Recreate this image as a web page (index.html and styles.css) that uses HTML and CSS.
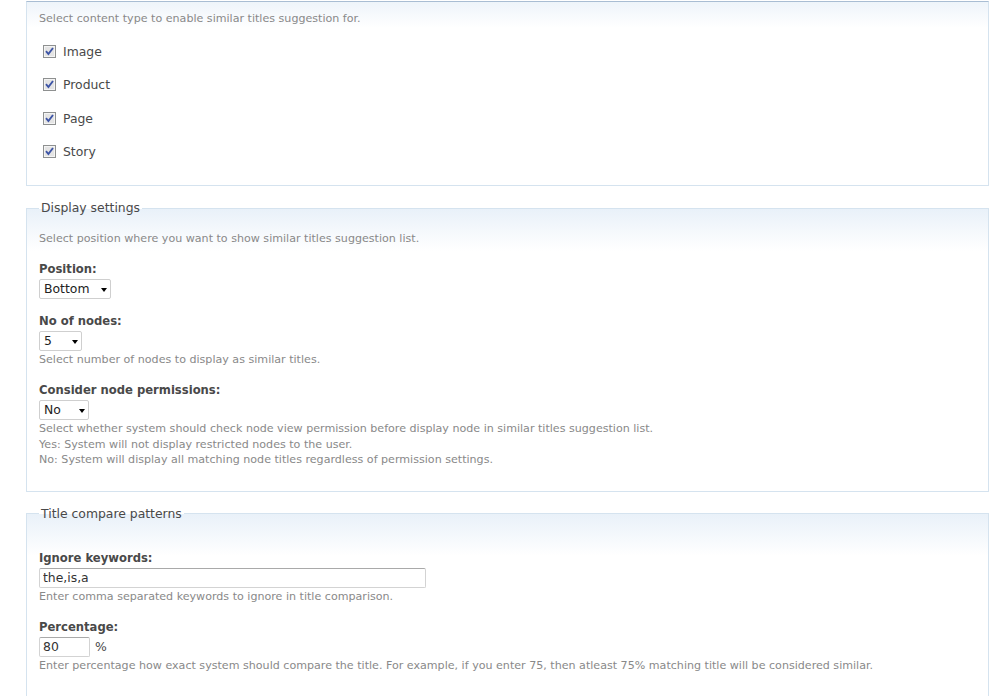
FILE: index.html
```html
<!DOCTYPE html>
<html lang="en">
<head>
    <meta charset="UTF-8">
    <meta name="viewport" content="width=device-width, initial-scale=1.0">
    <title>Similar titles settings</title>
    <link rel="stylesheet" href="styles.css">
</head>
<body>
    <form class="settings-form">
        <fieldset class="group group-top">
            <div class="description">Select content type to enable similar titles suggestion for.</div>
            <div class="checkboxes">
                <label class="option"><svg class="check" width="13" height="13" viewBox="0 0 13 13"><rect x="0.5" y="0.5" width="12" height="12" fill="#e4e4e4" stroke="#8e9090"/><rect x="1.5" y="1.5" width="10" height="10" fill="none" stroke="#f4f4f4"/><path d="M3 6.2 L5.4 9 L10 3" fill="none" stroke="#3d54a6" stroke-width="1.9"/></svg>Image</label>
                <label class="option"><svg class="check" width="13" height="13" viewBox="0 0 13 13"><rect x="0.5" y="0.5" width="12" height="12" fill="#e4e4e4" stroke="#8e9090"/><rect x="1.5" y="1.5" width="10" height="10" fill="none" stroke="#f4f4f4"/><path d="M3 6.2 L5.4 9 L10 3" fill="none" stroke="#3d54a6" stroke-width="1.9"/></svg>Product</label>
                <label class="option"><svg class="check" width="13" height="13" viewBox="0 0 13 13"><rect x="0.5" y="0.5" width="12" height="12" fill="#e4e4e4" stroke="#8e9090"/><rect x="1.5" y="1.5" width="10" height="10" fill="none" stroke="#f4f4f4"/><path d="M3 6.2 L5.4 9 L10 3" fill="none" stroke="#3d54a6" stroke-width="1.9"/></svg>Page</label>
                <label class="option"><svg class="check" width="13" height="13" viewBox="0 0 13 13"><rect x="0.5" y="0.5" width="12" height="12" fill="#e4e4e4" stroke="#8e9090"/><rect x="1.5" y="1.5" width="10" height="10" fill="none" stroke="#f4f4f4"/><path d="M3 6.2 L5.4 9 L10 3" fill="none" stroke="#3d54a6" stroke-width="1.9"/></svg>Story</label>
            </div>
        </fieldset>

        <fieldset class="group">
            <legend>Display settings</legend>
            <div class="description">Select position where you want to show similar titles suggestion list.</div>
            <div class="form-item">
                <label class="field-label" for="position">Position:</label>
                <span class="select"><select id="position" class="sel-position"><option>Bottom</option><option>Top</option></select></span>
            </div>
            <div class="form-item">
                <label class="field-label" for="nodes">No of nodes:</label>
                <span class="select"><select id="nodes" class="sel-nodes"><option>5</option><option>10</option></select></span>
                <div class="description">Select number of nodes to display as similar titles.</div>
            </div>
            <div class="form-item">
                <label class="field-label" for="perm">Consider node permissions:</label>
                <span class="select"><select id="perm" class="sel-perm"><option>No</option><option>Yes</option></select></span>
                <div class="description">Select whether system should check node view permission before display node in similar titles suggestion list.<br>Yes: System will not display restricted nodes to the user.<br>No: System will display all matching node titles regardless of permission settings.</div>
            </div>
        </fieldset>

        <fieldset class="group">
            <legend>Title compare patterns</legend>
            <div class="form-item first">
                <label class="field-label" for="keywords">Ignore keywords:</label>
                <input type="text" id="keywords" class="text-wide" value="the,is,a">
                <div class="description">Enter comma separated keywords to ignore in title comparison.</div>
            </div>
            <div class="form-item">
                <label class="field-label" for="percent">Percentage:</label>
                <div class="inline-field"><input type="text" id="percent" class="text-short" value="80"><span class="suffix">%</span></div>
                <div class="description">Enter percentage how exact system should compare the title. For example, if you enter 75, then atleast 75% matching title will be considered similar.</div>
            </div>
        </fieldset>
    </form>
</body>
</html>
```

FILE: styles.css
```css
body {
    margin: 0;
    padding: 0;
    font-family: "DejaVu Sans", Verdana, sans-serif;
    font-size: 12px;
    color: #494949;
    background: #fff;
}
.settings-form {
    margin: 0;
    padding: 1px 0 0 0;
}
.group {
    margin: 0 2px 14px 26px;
    padding: 15px 12px 23px 12px;
    border: 1px solid #d5e3ef;
    background: linear-gradient(#e9f1f9 0, #ffffff 42px);
    min-width: 0;
}
.group-top {
    padding-top: 9px;
    padding-bottom: 26px;
    border-top-color: #a9bdd3;
    background: linear-gradient(#eef4fa 0, #ffffff 26px);
}
.group legend {
    padding: 0 2px;
    font-size: 12.4px;
    line-height: 16px;
    color: #494949;
}
.description {
    font-size: 11.1px;
    line-height: 15.5px;
    color: #898989;
}
.form-item .description {
    margin-top: 1.5px;
}
.checkboxes .option {
    display: flex;
    align-items: center;
    height: 16px;
    margin-top: 17.33px;
    padding-left: 4px;
    font-size: 12.4px;
}
.checkboxes .option:first-child {
    margin-top: 17px;
}
.check {
    margin-right: 7px;
    flex: none;
}
.form-item {
    margin-top: 14px;
}
.form-item.first {
    margin-top: 13px;
}
.field-label {
    display: block;
    font-weight: bold;
    font-size: 11.6px;
    line-height: 16px;
    margin-top: 1px;
    margin-bottom: 2px;
}
.select {
    position: relative;
    display: flex;
    width: fit-content;
}
.select select {
    -webkit-appearance: none;
    appearance: none;
    display: block;
    box-sizing: border-box;
    height: 20px;
    margin: 0;
    padding: 0 0 0 4px;
    font-family: "DejaVu Sans", Verdana, sans-serif;
    font-size: 12.4px;
    color: #222;
    background: #fff;
    border: 1px solid #cfcfcf;
    border-radius: 2px;
}
.select::after {
    content: "";
    position: absolute;
    right: 4px;
    top: 9px;
    border-top: 4px solid #000;
    border-left: 3.5px solid transparent;
    border-right: 3.5px solid transparent;
}
.sel-position { width: 72px; }
.sel-nodes { width: 43px; }
.sel-perm { width: 50px; }
.form-item input[type="text"] {
    display: block;
    box-sizing: border-box;
    height: 20px;
    margin: 0;
    padding: 0 0 0 3px;
    font-family: "DejaVu Sans", Verdana, sans-serif;
    font-size: 12.4px;
    color: #333;
    border: 1px solid #d3d3d3;
    border-top-color: #a9a9a9;
    border-radius: 2px;
}
.text-wide { width: 387px; }
.text-short { width: 51px; }
.inline-field {
    display: flex;
    align-items: center;
}
.suffix {
    margin-left: 5px;
    font-size: 12.4px;
}
```
